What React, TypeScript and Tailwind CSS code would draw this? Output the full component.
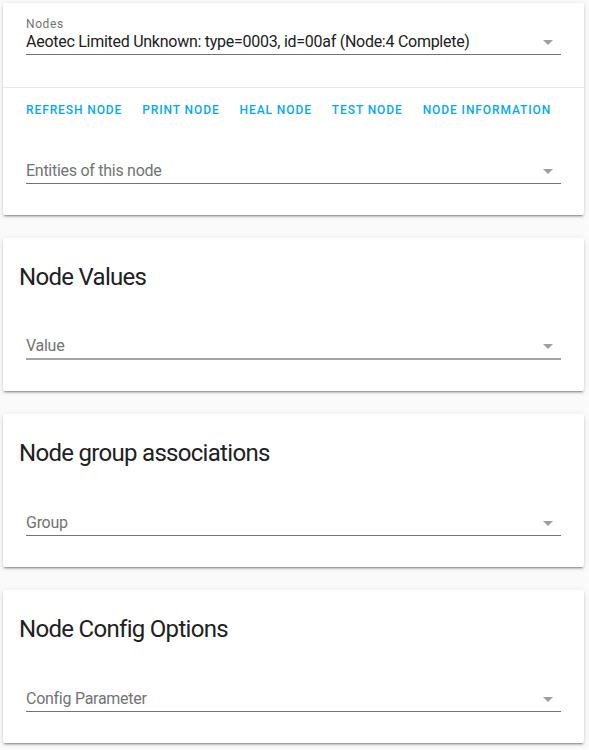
const font = { fontFamily: "Roboto, 'Noto Sans', sans-serif" };

const Caret = () => (
  <svg width="10" height="5" viewBox="0 0 10 5" className="shrink-0">
    <path d="M0 0 L10 0 L5 5 Z" fill="#9e9e9e" />
  </svg>
);

type DropdownProps = {
  label?: string;
  value?: string;
  placeholder?: string;
  lightLine?: boolean;
};

const Dropdown = ({ label, value, placeholder, lightLine }: DropdownProps) => (
  <div>
    {label && <div className="text-[12px] leading-[12px] tracking-[0.6px] text-[#737373]">{label}</div>}
    <div
      className={
        lightLine
          ? "flex items-center justify-between h-[25px] border-b-2 border-[#a3a3a3] pr-[8px] pb-[1px]"
          : "flex items-center justify-between h-[25px] border-b border-[#737373] pr-[8px]"
      }
    >
      {value ? (
        <span className="text-[16px] tracking-[-0.27px] text-[#212121]">{value}</span>
      ) : (
        <span className="text-[16px] tracking-[-0.27px] text-[#737373]">{placeholder}</span>
      )}
      <Caret />
    </div>
  </div>
);

const Card = ({ children }: { children: React.ReactNode }) => (
  <div className="bg-white rounded-[2px] shadow-[0_2px_2px_0_rgba(0,0,0,0.14),0_1px_5px_0_rgba(0,0,0,0.12),0_3px_1px_-2px_rgba(0,0,0,0.2)]">
    {children}
  </div>
);

const SimpleCard = ({ title, placeholder, lightLine }: { title: string; placeholder: string; lightLine?: boolean }) => (
  <Card>
    <h2 className="px-[16px] pt-[23px] pb-[16px] text-[24px] leading-[32px] tracking-[-0.7px] text-[#212121] font-normal">
      {title}
    </h2>
    <div className="px-[23px] pt-[26px] pb-[31px]">
      <Dropdown placeholder={placeholder} lightLine={lightLine} />
    </div>
  </Card>
);

export default function App() {
  const actions = ["Refresh Node", "Print Node", "Heal Node", "Test Node", "Node Information"];
  return (
    <div className="min-h-screen bg-[#fafafa] pt-[3px] pl-[3px] pr-[5px] pb-[6px] flex flex-col gap-[23px]" style={font}>
      <Card>
        <div className="px-[23px] pt-[15px] pb-[32px]">
          <Dropdown label="Nodes" value="Aeotec Limited Unknown: type=0003, id=00af (Node:4 Complete)" />
        </div>
        <div className="border-t border-[#e8e8e8] px-[23px] pt-[12px] flex gap-[20px]">
          {actions.map((a) => (
            <button
              key={a}
              className="uppercase text-[12px] leading-[20px] font-medium tracking-[0.9px] text-[#03a9f4] whitespace-nowrap"
            >
              {a}
            </button>
          ))}
        </div>
        <div className="px-[23px] pt-[39px] pb-[31px]">
          <Dropdown placeholder="Entities of this node" />
        </div>
      </Card>
      <SimpleCard title="Node Values" placeholder="Value" lightLine />
      <SimpleCard title="Node group associations" placeholder="Group" />
      <SimpleCard title="Node Config Options" placeholder="Config Parameter" />
    </div>
  );
}
